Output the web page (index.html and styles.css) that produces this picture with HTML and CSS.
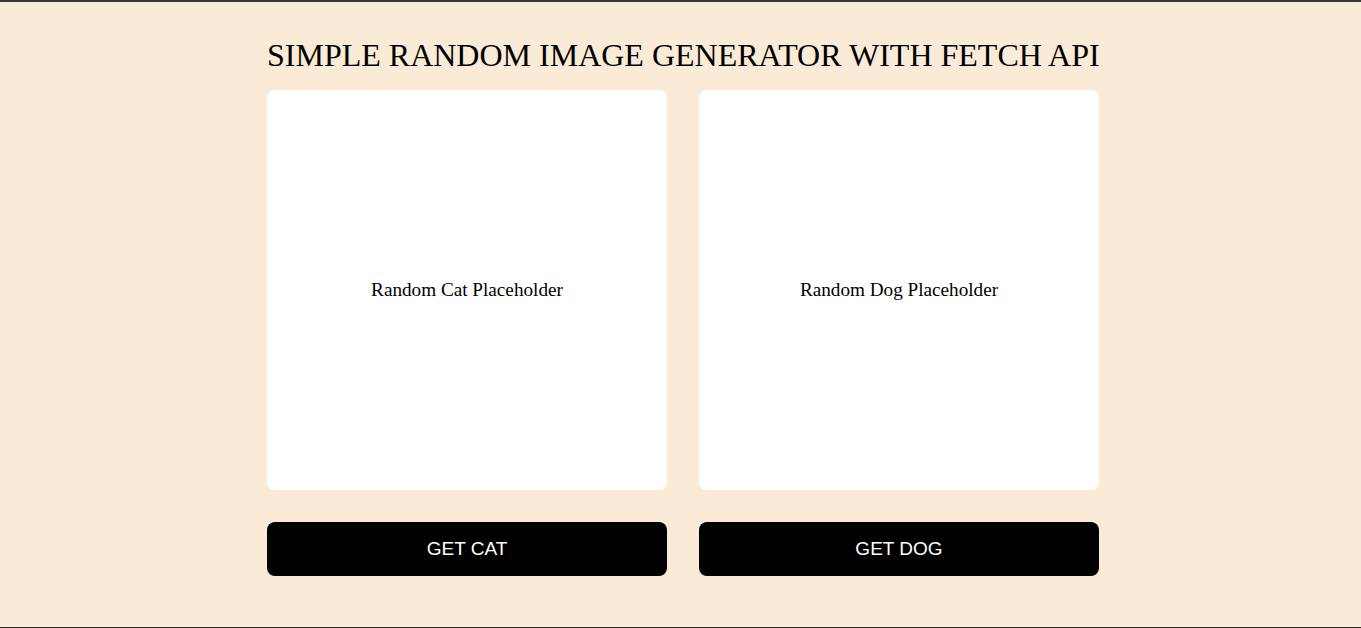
FILE: index.html
```html
<!DOCTYPE html>
<html lang="en">
  <head>
    <meta charset="UTF-8" />
    <title>Simple Random Image Generator</title>
    <link rel="stylesheet" href="styles.css">
  </head>
  <body>
    <div class="page">
      <main class="wrap">
        <h1>SIMPLE RANDOM IMAGE GENERATOR WITH FETCH API</h1>
        <div class="grid">
          <!-- Colonne chat -->
          <div class="col">
            <div class="card" id="cat">Random Cat Placeholder</div>
            <button class="btn" id="get-cat">GET CAT</button>
          </div>
          <!-- Colonne chien -->
          <div class="col">
            <div class="card" id="dog">Random Dog Placeholder</div>
            <button class="btn" id="get-dog">GET DOG</button>
          </div>
        </div>
      </main>
    </div>
  </body>
</html>
```

FILE: styles.css
```css
html,
body {
  margin: 0;
  height: 100%;
}
body {
  background: #faebd7;
  font-family: 'Liberation Serif', 'Times New Roman', serif;
  color: #000;
}
.page {
  box-sizing: border-box;
  min-height: 100vh;
  border-top: 2px solid #3a3a3a;
  border-bottom: 1px solid #2a2a2a;
  padding-left: 5px;
}
.wrap {
  width: 832px;
  margin: 0 auto;
  padding-top: 38px;
}
h1 {
  margin: 0 0 20px;
  font-weight: normal;
  font-size: 32px;
  line-height: 30px;
  text-align: center;
  white-space: nowrap;
}
.grid {
  display: grid;
  grid-template-columns: 400px 400px;
  gap: 32px;
}
.col {
  display: flex;
  flex-direction: column;
  gap: 32px;
}
.card {
  width: 400px;
  height: 400px;
  background: #fff;
  border-radius: 8px;
  display: flex;
  align-items: center;
  justify-content: center;
  font-size: 19.2px;
}
.btn {
  height: 54px;
  padding: 0;
  border: none;
  border-radius: 8px;
  background: #000;
  color: #fff;
  font-family: 'Liberation Sans', Arial, sans-serif;
  font-size: 19px;
  cursor: pointer;
}
```
